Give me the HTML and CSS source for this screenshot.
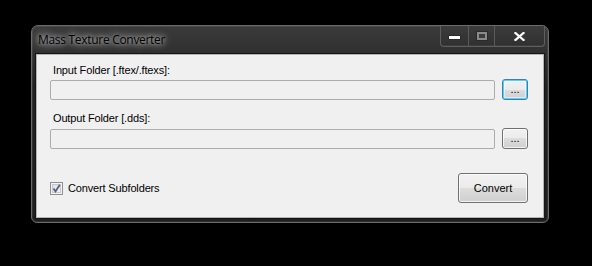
FILE: index.html
```html
<!DOCTYPE html>
<html>
<head>
<meta charset="utf-8">
<link rel="stylesheet" href="styles.css">
</head>
<body>
<div class="window">
  <div class="titlebar">
    <span class="title">Mass Texture Converter</span>
    <div class="caption">
      <div class="cbtn min"><span class="min-icon"></span></div>
      <div class="cbtn max"><span class="max-icon"></span></div>
      <div class="cbtn close">
        <svg width="11" height="9" viewBox="0 0 11 9"><path d="M1.5 1 L9.5 8 M9.5 1 L1.5 8" stroke="#3a3a3a" stroke-width="4" stroke-linecap="square"/><path d="M1.5 1 L9.5 8 M9.5 1 L1.5 8" stroke="#ffffff" stroke-width="2.2" stroke-linecap="square"/></svg>
      </div>
    </div>
  </div>
  <div class="client">
    <div class="label">Input Folder [.ftex/.ftexs]:</div>
    <div class="row">
      <div class="textbox"></div>
      <div class="btn small focus">...</div>
    </div>
    <div class="label second">Output Folder [.dds]:</div>
    <div class="row">
      <div class="textbox"></div>
      <div class="btn small">...</div>
    </div>
    <div class="bottom">
      <div class="check">
        <span class="box">
          <svg width="11" height="11" viewBox="0 0 11 11"><path d="M2.5 5.5 L4.5 8.5 L8.8 1.8" fill="none" stroke="#4d6185" stroke-width="1.7"/></svg>
        </span>
        <span class="checklabel">Convert Subfolders</span>
      </div>
      <div class="btn convert">Convert</div>
    </div>
  </div>
</div>
</body>
</html>
```
FILE: styles.css
```css
html, body {
  margin: 0;
  padding: 0;
  background: #000;
}
body {
  padding: 25px 0 0 31px;
  font-family: "Liberation Sans", Arial, sans-serif;
  font-size: 11px;
  color: #000;
}
.window {
  width: 518px;
  height: 198px;
  box-sizing: border-box;
  border: 1px solid #6b6b6b;
  border-radius: 7px 7px 6px 6px;
  background: linear-gradient(#3a3a3a, #303030 28px, #222 60px, #1e1e1e);
  box-shadow: inset 0 0 0 1px rgba(255,255,255,0.08);
  padding: 0 4px 4px 4px;
}
.titlebar {
  height: 28px;
  display: flex;
  justify-content: space-between;
  align-items: flex-start;
}
.title {
  font-family: "Open Sans", "Noto Sans", sans-serif;
  font-size: 12px;
  color: #000;
  padding: 7px 0 0 2px;
  line-height: 14px;
  letter-spacing: -0.3px;
  text-shadow: 0 0 4px rgba(255,255,255,0.6), 0 0 8px rgba(255,255,255,0.55), 0 0 12px rgba(255,255,255,0.45), 0 0 16px rgba(255,255,255,0.3);
}
.caption {
  display: flex;
  height: 20px;
  margin-right: -1px;
  border: 1px solid #5e5e5e;
  border-top: none;
  border-radius: 0 0 4px 4px;
  background: linear-gradient(#3c3c3c, #303030);
  box-shadow: inset 0 -1px 0 rgba(255,255,255,0.06);
}
.cbtn {
  display: flex;
  align-items: center;
  justify-content: center;
}
.cbtn.min { width: 27px; border-right: 1px solid #5a5a5a; }
.cbtn.max { width: 25px; border-right: 1px solid #5a5a5a; }
.cbtn.close { width: 49px; padding-top: 1px; }
.min-icon {
  width: 11px;
  height: 3px;
  margin-top: 3px;
  background: #fff;
  border: 1px solid #2a2a2a;
}
.max-icon {
  width: 6px;
  height: 4px;
  border: 2px solid #8a8a8a;
  background: #3c3c3c;
  outline: 1px solid #2a2a2a;
}
.client {
  box-sizing: border-box;
  width: 508px;
  height: 164px;
  border: 1px solid #b4b4b4;
  background: #f0f0f0;
  box-shadow: 0 0 0 1px #151515;
  padding: 9px 15px 0 13px;
}
.label {
  line-height: 13px;
  padding-left: 3px;
  margin-bottom: 2px;
  letter-spacing: -0.15px;
}
.label.second {
  margin-top: 12px;
  margin-bottom: 3px;
}
.row {
  display: flex;
  align-items: flex-end;
  gap: 7px;
  height: 21px;
}
.textbox {
  width: 445px;
  height: 20px;
  box-sizing: border-box;
  border: 1px solid #acacac;
  border-radius: 2px;
  background: #f0f0f0;
}
.btn {
  box-sizing: border-box;
  border: 1px solid #707070;
  border-radius: 3px;
  background: linear-gradient(#f2f2f2, #ebebeb 50%, #dddddd 50%, #cfcfcf);
  box-shadow: inset 0 0 0 1px rgba(255,255,255,0.75);
  display: flex;
  align-items: center;
  justify-content: center;
}
.btn.small {
  width: 26px;
  height: 21px;
  line-height: 11px;
  align-items: flex-end;
  padding-bottom: 4px;
  font-size: 11px;
}
.btn.focus {
  border-color: #3c7fb1;
  box-shadow: inset 0 0 0 1px #4ed3fb, inset 0 0 0 2px rgba(255,255,255,0.5);
}
.bottom {
  margin-top: 24px;
  display: flex;
  justify-content: space-between;
  align-items: center;
}
.check {
  display: flex;
  align-items: center;
  gap: 5px;
}
.box {
  width: 13px;
  height: 13px;
  box-sizing: border-box;
  border: 1px solid #8e8f8f;
  background: linear-gradient(135deg, #dcdcdc, #f6f6f6);
  box-shadow: inset 0 0 0 1px #f4f4f4, inset 0 0 0 2px #c8c8c8;
  display: flex;
  align-items: center;
  justify-content: center;
}
.box svg { display: block; }
.checklabel {
  line-height: 13px;
  letter-spacing: -0.15px;
}
.btn.convert {
  width: 70px;
  height: 30px;
  font-size: 11px;
}
```
